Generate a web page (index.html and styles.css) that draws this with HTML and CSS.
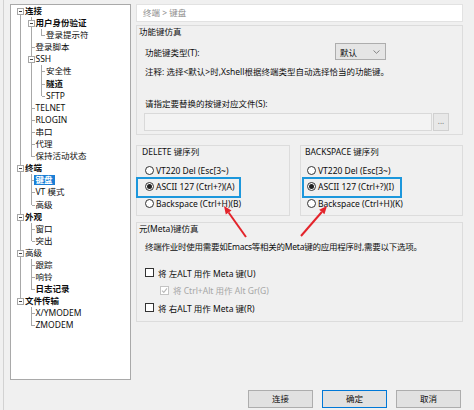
FILE: index.html
```html
<!DOCTYPE html>
<html lang="zh">
<head>
<meta charset="utf-8">
<link rel="stylesheet" href="styles.css">
</head>
<body>
<div class="window">
  <div class="main">
    <div class="tree-box">
      <ul class="tree">
        <li><div class="row"><span class="exp"></span><span class="b">连接</span></div>
          <ul>
            <li><div class="row"><span class="exp"></span><span class="b">用户身份验证</span></div>
              <ul><li><div class="row">登录提示符</div></li></ul>
            </li>
            <li><div class="row">登录脚本</div></li>
            <li><div class="row"><span class="exp"></span>SSH</div>
              <ul>
                <li><div class="row">安全性</div></li>
                <li><div class="row"><span class="b">隧道</span></div></li>
                <li><div class="row">SFTP</div></li>
              </ul>
            </li>
            <li><div class="row">TELNET</div></li>
            <li><div class="row">RLOGIN</div></li>
            <li><div class="row">串口</div></li>
            <li><div class="row">代理</div></li>
            <li><div class="row">保持活动状态</div></li>
          </ul>
        </li>
        <li><div class="row"><span class="exp"></span><span class="b">终端</span></div>
          <ul>
            <li><div class="row"><span class="sel">键盘</span></div></li>
            <li><div class="row">VT 模式</div></li>
            <li><div class="row">高级</div></li>
          </ul>
        </li>
        <li><div class="row"><span class="exp"></span><span class="b">外观</span></div>
          <ul>
            <li><div class="row">窗口</div></li>
            <li><div class="row">突出</div></li>
          </ul>
        </li>
        <li><div class="row"><span class="exp"></span>高级</div>
          <ul>
            <li><div class="row">跟踪</div></li>
            <li><div class="row">响铃</div></li>
            <li><div class="row"><span class="b">日志记录</span></div></li>
          </ul>
        </li>
        <li><div class="row"><span class="exp"></span><span class="b">文件传输</span></div>
          <ul>
            <li><div class="row">X/YMODEM</div></li>
            <li><div class="row">ZMODEM</div></li>
          </ul>
        </li>
      </ul>
    </div>

    <div class="content">
      <div class="crumb">终端 &gt; 键盘</div>

      <div class="group g-func">
        <div class="gtitle t-wide">功能键仿真</div>
        <div class="field">
          <span class="flabel">功能键类型(T):</span>
          <span class="select">默认<svg class="chev" width="7" height="4" viewBox="0 0 7 4"><path d="M0.5 0.5 L3.5 3.3 L6.5 0.5" fill="none" stroke="#7a7a7a" stroke-width="0.9"/></svg></span>
        </div>
        <div class="note">注释: 选择&lt;默认&gt;时,Xshell根据终端类型自动选择恰当的功能键。</div>
        <div class="note filelabel">请指定要替换的按键对应文件(S):</div>
        <div class="filerow">
          <span class="fileinput"></span>
          <span class="dots">...</span>
        </div>
      </div>

      <div class="seqrow">
        <div class="group g-del">
          <div class="gtitle t-del">DELETE 键序列</div>
          <div class="radios">
            <div class="radio"><span class="circle"></span>VT220 Del (Esc[3~)</div>
            <div class="radio"><span class="circle on"></span>ASCII 127 (Ctrl+?)(A)</div>
            <div class="radio"><span class="circle"></span>Backspace (Ctrl+H)(B)</div>
          </div>
        </div>
        <div class="group g-bs">
          <div class="gtitle t-bs">BACKSPACE 键序列</div>
          <div class="radios r-bs">
            <div class="radio"><span class="circle"></span>VT220 Del (Esc[3~)</div>
            <div class="radio"><span class="circle on"></span>ASCII 127 (Ctrl+?)(I)</div>
            <div class="radio"><span class="circle"></span>Backspace (Ctrl+H)(K)</div>
          </div>
        </div>
      </div>

      <div class="group g-meta">
        <div class="gtitle t-wide">元(Meta)键仿真</div>
        <div class="note meta-note">终端作业时使用需要如Emacs等相关的Meta键的应用程序时,需要以下选项。</div>
        <div class="checks">
          <div class="check"><span class="box"></span>将 左ALT 用作 Meta 键(U)</div>
          <div class="check sub disabled"><span class="box"><svg width="7" height="7" viewBox="0 0 7 7"><path d="M1 3.6 L2.8 5.4 L6 1.4" fill="none" stroke="#b8b8b8" stroke-width="1.1"/></svg></span>将 Ctrl+Alt 用作 Alt Gr(G)</div>
          <div class="check"><span class="box"></span>将 右ALT 用作 Meta 键(R)</div>
        </div>
      </div>
    </div>
  </div>

  <div class="buttons">
    <span class="btn">连接</span>
    <span class="btn default">确定</span>
    <span class="btn">取消</span>
  </div>
</div>

<svg class="annot" width="474" height="410" viewBox="0 0 474 410">
  <rect x="137" y="178" width="103" height="19" fill="none" stroke="#1c97dc" stroke-width="2"/>
  <rect x="303" y="178" width="98" height="19" fill="none" stroke="#1c97dc" stroke-width="2"/>
  <line x1="246" y1="237" x2="228.6" y2="212.5" stroke="#e3242b" stroke-width="2"/>
  <polygon points="224,206 231.5,210.5 225.8,214.5" fill="#e3242b"/>
  <line x1="301" y1="236" x2="321.8" y2="212" stroke="#e3242b" stroke-width="2"/>
  <polygon points="327,206 324.4,214.3 319.2,209.7" fill="#e3242b"/>
</svg>
</body>
</html>
```

FILE: styles.css
```css
* { box-sizing: border-box; margin: 0; padding: 0; }

body {
  width: 474px;
  height: 410px;
  background: #f0f0f0;
  font-family: "Noto Sans", "Noto Sans CJK SC", sans-serif;
  font-size: 8.5px;
  color: #0d0d0d;
  overflow: hidden;
  position: relative;
}

.window {
  margin-left: 3px;
  border-left: 1px solid #d2d2d2;
  height: 410px;
  padding: 4px 11px 0 6px;
}

.main {
  display: flex;
  gap: 5px;
  height: 376px;
}

/* ---------- tree ---------- */
.tree-box {
  width: 121px;
  flex: none;
  border: 1px solid #a9a9a9;
  background: #fff;
  overflow: hidden;
}

.tree, .tree ul { list-style: none; }
.tree ul { padding-left: 10.5px; }

.tree li { position: relative; }
.tree li::before {
  content: "";
  position: absolute;
  left: 9px;
  top: 0;
  bottom: 0;
  width: 1px;
  background: #a8a8a8;
}
.tree li:last-child::before { bottom: auto; height: 6.5px; }
.tree > li:first-child::before { top: 6px; }
.tree li::after {
  content: "";
  position: absolute;
  left: 10px;
  top: 6px;
  width: 3px;
  height: 1px;
  background: #a8a8a8;
}

.row {
  position: relative;
  height: 12.1px;
  line-height: 12.1px;
  padding-left: 14px;
  white-space: nowrap;
  display: flex;
  align-items: center;
  z-index: 1;
}

.exp {
  position: absolute;
  left: 6px;
  top: 3px;
  width: 7px;
  height: 7px;
  border: 1px solid #a6a6a6;
  background: #fff;
}
.exp::after {
  content: "";
  position: absolute;
  left: 1px;
  top: 2px;
  width: 3px;
  height: 1px;
  background: #444;
}

.b { font-weight: 700; }

.sel {
  background: #1b7fd6;
  color: #fff;
  font-weight: 700;
  padding: 0 2px;
  margin-left: -2px;
  line-height: 10px;
}

/* ---------- content ---------- */
.content {
  flex: 1;
  display: flex;
  flex-direction: column;
}

.crumb {
  height: 18px;
  border: 1px solid #e2e2e2;
  background: #fff;
  padding-left: 6px;
  line-height: 16px;
  color: #8c8c8c;
}

.group {
  border: 1px solid #dcdcdc;
}

.gtitle {
  height: 12px;
  line-height: 12px;
  white-space: nowrap;
}
.t-wide { padding-left: 2px; }
.t-del { padding-left: 5px; }
.t-bs { padding-left: 4px; }

.g-func {
  margin-top: 3px;
  height: 110px;
  padding-right: 13px;
}

.field {
  display: flex;
  align-items: center;
  height: 17px;
  margin-top: 5px;
  padding-left: 8px;
}
.flabel { width: 190px; }
.select {
  width: 51px;
  height: 17px;
  border: 1px solid #adadad;
  background: #e5e5e5;
  display: flex;
  align-items: center;
  justify-content: space-between;
  padding: 0 5px 0 4px;
}
.chev { display: block; }

.note {
  height: 12px;
  line-height: 12px;
  margin-top: 6px;
  padding-left: 8px;
  white-space: nowrap;
}
.meta-note { letter-spacing: -0.25px; }
.filelabel { margin-top: 20px; }

.filerow {
  display: flex;
  height: 18px;
  margin-top: 3px;
  padding-left: 7px;
}
.fileinput {
  flex: 1;
  border: 1px solid #d9d9d9;
  background: #f3f3f3;
}
.dots {
  width: 16px;
  margin-left: 1px;
  border: 1px solid #d0d0d0;
  background: #e8e8e8;
  color: #777;
  text-align: center;
  line-height: 14px;
  font-size: 8px;
}

.seqrow {
  display: flex;
  gap: 10px;
  margin-top: 10px;
  height: 71px;
}
.g-del { width: 154px; flex: none; }
.g-bs { flex: 1; }

.radios {
  margin-top: 4px;
  padding-left: 8px;
}
.r-bs { padding-left: 6px; }

.radio {
  display: flex;
  align-items: center;
  height: 16.5px;
  white-space: nowrap;
}
.circle {
  width: 9px;
  height: 9px;
  border: 1px solid #333;
  border-radius: 50%;
  background: #fff;
  margin-right: 2px;
  display: flex;
  align-items: center;
  justify-content: center;
  flex: none;
}
.circle.on::after {
  content: "";
  width: 5px;
  height: 5px;
  border-radius: 50%;
  background: #222;
}

.g-meta {
  margin-top: 6px;
  height: 100px;
}

.checks { margin-top: 11px; padding-left: 8px; }
.check {
  display: flex;
  align-items: center;
  height: 17.5px;
  white-space: nowrap;
}
.check.sub { padding-left: 15px; }
.box {
  width: 9px;
  height: 9px;
  border: 1px solid #333;
  background: #fff;
  margin-right: 4px;
  flex: none;
  display: flex;
  align-items: center;
  justify-content: center;
}
.disabled { color: #a6a6a6; }
.disabled .box { border-color: #c4c4c4; }

/* ---------- buttons ---------- */
.buttons {
  display: flex;
  justify-content: flex-end;
  gap: 9px;
  margin-top: 10px;
  padding-right: 2px;
}
.btn {
  width: 65px;
  height: 18px;
  border: 1px solid #adadad;
  background: #e1e1e1;
  text-align: center;
  line-height: 16px;
}
.btn.default { border-color: #0078d7; }

/* ---------- annotations ---------- */
.annot {
  position: absolute;
  left: 0;
  top: 0;
  pointer-events: none;
}
```
